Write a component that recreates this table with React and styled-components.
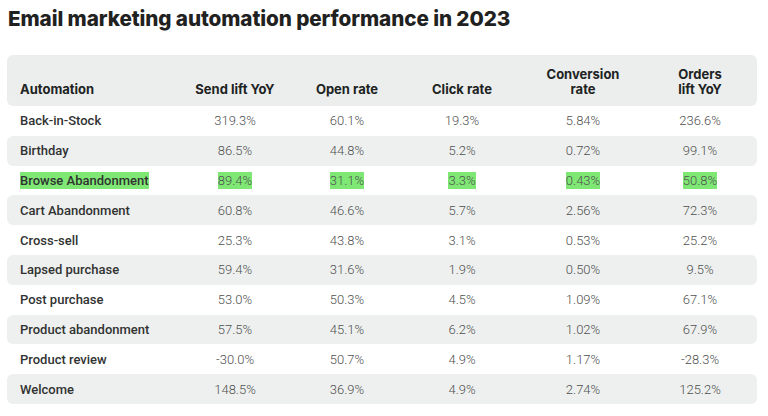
import React from 'react';
import styled, { createGlobalStyle } from 'styled-components';

const GlobalStyle = createGlobalStyle`
  html, body { margin:0; padding:0; background:#ffffff; }
  body { font-family: Roboto, "Liberation Sans", sans-serif; }
`

const Page = styled.div`
  width:768px;
  height:416px;
  padding:0 11px 0 7px;
  box-sizing:border-box;
  overflow:hidden;
`

const Title = styled.h1`
  margin:0;
  padding:6px 0 0 1px;
  height:55px;
  box-sizing:border-box;
  font-family: Inter, "Liberation Sans", sans-serif;
  font-weight:800;
  font-size:20.7px;
  line-height:26px;
  letter-spacing:-0.1px;
  color:#1f2221;
`

const cols = '170px 116px 108px 122px 120px 114px'

const HeadRow = styled.div`
  display:grid;
  grid-template-columns:${cols};
  height:51px;
  background:#eceeed;
  border-radius:6px;
  padding-bottom:9px;
  box-sizing:border-box;
  align-items:end;
`

const HeadCell = styled.div`
  font-family: Inter, "Liberation Sans", sans-serif;
  font-weight:700;
  font-size:13px;
  line-height:15px;
  color:#202322;
  text-align:${({left}) => left ? 'left' : 'center'};
  padding-left:${({left}) => left ? '13px' : '0'};
`

const Row = styled.div`
  display:grid;
  grid-template-columns:${cols};
  height:29.8px;
  align-items:center;
  background:${({striped}) => striped ? '#eef0ef' : '#ffffff'};
  border-radius:6px;
`

const NameCell = styled.div`
  padding-left:13px;
  font-size:13px;
  font-weight:500;
  color:#313332;
  white-space:nowrap;
`

const ValueCell = styled.div`
  text-align:center;
  font-size:13px;
  font-weight:300;
  color:#4f5150;
`

const Mark = styled.span`
  background:${({on}) => on ? '#7fe875' : 'transparent'};
  padding:1px 0;
`

const heads = ['Send lift YoY', 'Open rate', 'Click rate', ['Conversion', 'rate'], ['Orders', 'lift YoY']]

const rows = [
  ['Back-in-Stock', '319.3%', '60.1%', '19.3%', '5.84%', '236.6%'],
  ['Birthday', '86.5%', '44.8%', '5.2%', '0.72%', '99.1%'],
  ['Browse Abandonment', '89.4%', '31.1%', '3.3%', '0.43%', '50.8%'],
  ['Cart Abandonment', '60.8%', '46.6%', '5.7%', '2.56%', '72.3%'],
  ['Cross-sell', '25.3%', '43.8%', '3.1%', '0.53%', '25.2%'],
  ['Lapsed purchase', '59.4%', '31.6%', '1.9%', '0.50%', '9.5%'],
  ['Post purchase', '53.0%', '50.3%', '4.5%', '1.09%', '67.1%'],
  ['Product abandonment', '57.5%', '45.1%', '6.2%', '1.02%', '67.9%'],
  ['Product review', '-30.0%', '50.7%', '4.9%', '1.17%', '-28.3%'],
  ['Welcome', '148.5%', '36.9%', '4.9%', '2.74%', '125.2%'],
]

const highlighted = 'Browse Abandonment'

export default function App() {
  return <>
    <GlobalStyle />
    <Page>
      <Title>Email marketing automation performance in 2023</Title>
      <HeadRow>
        <HeadCell left>Automation</HeadCell>
        {heads.map((h, i) => <HeadCell key={i}>
          {Array.isArray(h) ? <>{h[0]}<br />{h[1]}</> : h}
        </HeadCell>)}
      </HeadRow>
      {rows.map((r, i) => {
        const on = r[0] === highlighted
        return <Row key={r[0]} striped={i % 2 === 1}>
          <NameCell><Mark on={on}>{r[0]}</Mark></NameCell>
          {r.slice(1).map((v, j) => <ValueCell key={j}><Mark on={on}>{v}</Mark></ValueCell>)}
        </Row>
      })}
    </Page>
  </>
}
